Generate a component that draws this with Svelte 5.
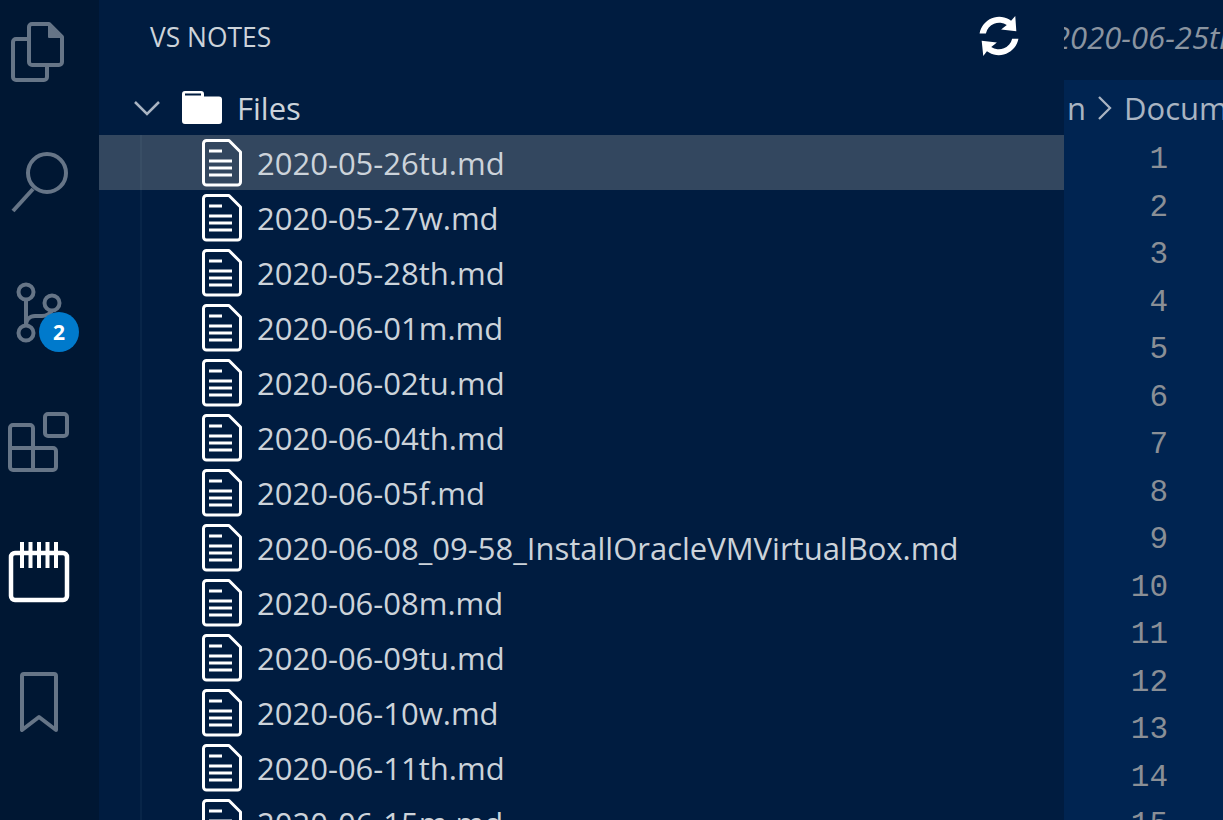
<script>
  const activityIcons = ['files', 'search', 'git', 'extensions', 'notes', 'bookmark'];

  const files = [
    '2020-05-26tu.md',
    '2020-05-27w.md',
    '2020-05-28th.md',
    '2020-06-01m.md',
    '2020-06-02tu.md',
    '2020-06-04th.md',
    '2020-06-05f.md',
    '2020-06-08_09-58_InstallOracleVMVirtualBox.md',
    '2020-06-08m.md',
    '2020-06-09tu.md',
    '2020-06-10w.md',
    '2020-06-11th.md',
    '2020-06-15m.md'
  ];

  const lineNumbers = Array.from({ length: 15 }, (_, i) => i + 1);
</script>

<div class="window">
  <nav class="activity">
    {#each activityIcons as icon}
      <div class="activity-item" class:active={icon === 'notes'}>
        <svg viewBox="0 0 99 64" width="99" height="64" fill="none" stroke="currentColor" stroke-width="4" stroke-linejoin="round">
          {#if icon === 'files'}
            <path d="M32 4H49L62 17V42a3 3 0 0 1-3 3H32a3 3 0 0 1-3-3V7a3 3 0 0 1 3-3z" />
            <path d="M49 5V17H61z" fill="currentColor" stroke-width="2" />
            <path d="M29 19H16a3 3 0 0 0-3 3V57a3 3 0 0 0 3 3H44a3 3 0 0 0 3-3V45" />
          {:else if icon === 'search'}
            <circle cx="47" cy="23" r="19" />
            <path d="M33 39 13 61" stroke-width="4" />
          {:else if icon === 'git'}
            <circle cx="26" cy="12" r="7.500" />
            <circle cx="52" cy="23" r="7.500" />
            <circle cx="26" cy="53" r="7.500" />
            <path d="M26 19.500V45.500M26 45.500c0-6 4-9.500 9-9.500h7c4 0 8-2 10-5.500" />
          {:else if icon === 'extensions'}
            <path d="M13 15H30a3 3 0 0 1 3 3V60H13a3 3 0 0 1-3-3V18a3 3 0 0 1 3-3z" />
            <path d="M10 38H53a3 3 0 0 1 3 3V57a3 3 0 0 1-3 3H33" />
            <rect x="45" y="4" width="22" height="22" rx="3" />
          {:else if icon === 'notes'}
            <rect x="11" y="13" width="56" height="47" rx="4" stroke-width="4.500" />
            <path d="M22 2V28M30.500 2V28M39 2V28M47.500 2V28M56 2V28" />
          {:else}
            <path d="M24 4H54a2 2 0 0 1 2 2V60L39 47 22 60V6a2 2 0 0 1 2-2z" />
          {/if}
        </svg>
        {#if icon === 'git'}
          <span class="badge">2</span>
        {/if}
      </div>
    {/each}
  </nav>

  <aside class="sidebar">
    <header class="sidebar-title">
      <span>VS NOTES</span>
      <svg class="refresh" viewBox="0 0 40 40" width="42" height="42" fill="#fff">
        <path d="M35.500 1 36.500 15.500 22 13.700 27.400 9.500A13 13 0 0 0 7.500 17.500H1.500A19 19 0 0 1 31.500 5.500z" />
        <path d="M5 39 3.500 24.500 18 26.300 12.600 30.500A13 13 0 0 0 32.500 22.500H38.500A19 19 0 0 1 8.500 34.500z" />
      </svg>
    </header>

    <div class="tree">
      <div class="folder-row">
        <svg class="chevron" viewBox="0 0 28 16" width="28" height="16" fill="none" stroke="#a9b4c2" stroke-width="2.500">
          <path d="M2 2 14 14 26 2" />
        </svg>
        <svg class="folder" viewBox="0 0 40 33" width="40" height="33">
          <path d="M3 0h16a3 3 0 0 1 3 3v2.500H37a3 3 0 0 1 3 3V30a3 3 0 0 1-3 3H3a3 3 0 0 1-3-3V3a3 3 0 0 1 3-3z" fill="#fff" />
          <rect x="3" y="2.500" width="16" height="2" fill="#001c40" />
        </svg>
        <span>Files</span>
      </div>
      {#each files as file, i}
        <div class="file-row" class:selected={i === 0}>
          <svg viewBox="0 0 40 48" width="40" height="48" fill="none" stroke="#fff" stroke-width="3">
            <path d="M4.500 1.500H27L38.500 13V43a3 3 0 0 1-3 3H4.500a3 3 0 0 1-3-3V4.500a3 3 0 0 1 3-3z" stroke-linejoin="round" />
            <path d="M7 12H20M7 22H30M7 29H30M7 36H30" stroke-width="2.800" />
          </svg>
          <span>{file}</span>
        </div>
      {/each}
    </div>
  </aside>

  <main class="editor">
    <div class="tabs"><span>2020-06-25th.md</span></div>
    <div class="crumbs">
      <span class="crumb-cut">n</span>
      <svg viewBox="0 0 16 26" width="16" height="26" fill="none" stroke="#a9b4c2" stroke-width="2.300">
        <path d="M2 2 13 13 2 24" />
      </svg>
      <span>Documents</span>
    </div>
    <div class="gutter">
      {#each lineNumbers as n}
        <div class="line-number">{n}</div>
      {/each}
    </div>
  </main>
</div>

<style>
  :global(html), :global(body) {
    margin: 0;
    height: 100%;
    overflow: hidden;
    background: #001c40;
  }

  .window {
    display: flex;
    width: 1223px;
    height: 820px;
    overflow: hidden;
    font-family: "Open Sans", "Noto Sans", sans-serif;
  }

  .activity {
    flex: 0 0 99px;
    display: flex;
    flex-direction: column;
    background: #001733;
    color: #667587;
    padding-top: 20px;
    gap: 66px;
    box-sizing: border-box;
  }

  .activity-item {
    position: relative;
    height: 64px;
  }

  .activity-item svg {
    display: block;
  }

  .activity-item.active {
    color: #fff;
  }

  .badge {
    position: absolute;
    left: 39px;
    top: 32px;
    width: 40px;
    height: 40px;
    border-radius: 50%;
    background: #007acc;
    color: #fff;
    font-size: 21px;
    font-weight: 700;
    text-align: center;
    line-height: 40px;
  }

  .sidebar {
    flex: 0 0 965px;
    background: #001c40;
    color: #ccd3da;
    overflow: hidden;
  }

  .sidebar-title {
    height: 80px;
    box-sizing: border-box;
    padding: 0 44px 6px 51px;
    display: flex;
    align-items: center;
    justify-content: space-between;
    font-size: 26.4px;
  }

  .refresh {
    margin-top: -2px;
  }

  .folder-row {
    height: 55px;
    display: flex;
    align-items: center;
    padding-left: 34px;
    font-size: 31px;
  }

  .folder {
    margin-left: 21px;
    margin-right: 15px;
  }

  .tree {
    background-image: linear-gradient(#082548, #082548);
    background-size: 2px 100%;
    background-position: 41px 55px;
    background-repeat: no-repeat;
  }

  .file-row {
    height: 55px;
    display: flex;
    align-items: center;
    gap: 15px;
    padding-left: 103px;
    font-size: 31px;
    white-space: nowrap;
  }

  .file-row.selected {
    background: rgba(255, 243, 219, 0.2);
  }

  .editor {
    flex: 1;
    min-width: 0;
    background: #002451;
    color: #8a94a0;
    overflow: hidden;
  }

  .tabs {
    height: 80px;
    box-sizing: border-box;
    background: #001c40;
    padding-top: 16px;
    font-size: 31px;
    font-style: italic;
    white-space: nowrap;
    overflow: hidden;
  }

  .tabs span {
    display: inline-block;
    margin-left: -11px;
  }

  .crumbs {
    height: 55px;
    display: flex;
    align-items: center;
    gap: 11px;
    font-size: 31px;
    color: #a9b4c2;
    white-space: nowrap;
  }

  .crumbs svg {
    flex-shrink: 0;
  }

  .crumb-cut {
    margin-left: 3px;
  }

  .gutter {
    font-family: "Liberation Mono", monospace;
    font-size: 31px;
    color: #8a8f96;
    width: 104px;
    margin-top: 1px;
  }

  .line-number {
    height: 47.5px;
    line-height: 47.5px;
    text-align: right;
  }
</style>
